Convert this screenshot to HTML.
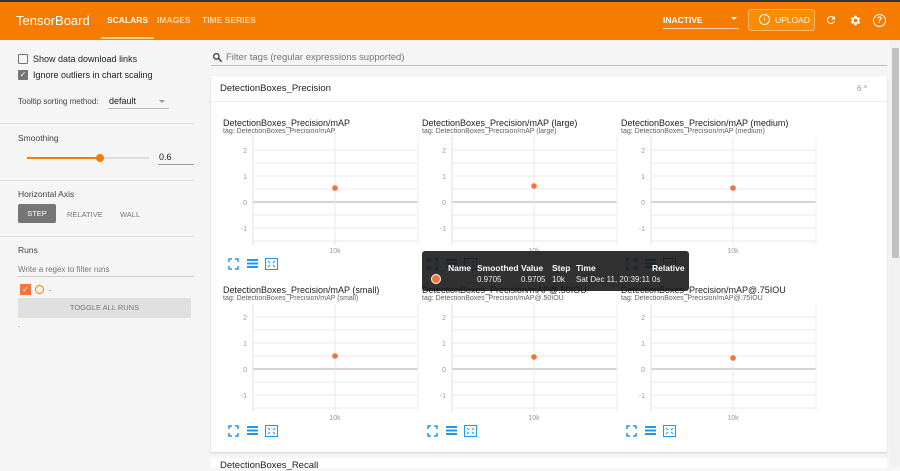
<!DOCTYPE html>
<html><head><meta charset="utf-8">
<style>
*{box-sizing:border-box;margin:0;padding:0}
body{width:900px;height:466px;overflow:hidden;background:#f5f5f5;font-family:"Liberation Sans",Arial,sans-serif;color:#212121;position:relative}
.a{position:absolute;white-space:nowrap}
.hdr{left:0;top:0;width:900px;height:40px;background:#f57c00;border-top:2px solid #333}
.t{font-size:9px;color:#212121}
.s{font-size:7px;color:#616161}
.sep{position:absolute;left:0;width:194px;height:1px;background:#e0e0e0}
</style></head><body>
<div class="a hdr"></div>
<div class="a" style="left:16px;top:13px;font-size:13px;color:#fff;font-weight:500">TensorBoard</div>
<div class="a" style="left:107px;top:15px;font-size:8.5px;color:#fff;font-weight:bold">SCALARS</div>
<div class="a" style="left:101px;top:37px;width:53px;height:2px;background:#ffcc80"></div>
<div class="a" style="left:157px;top:15px;font-size:8.5px;color:#ffd7a8;font-weight:bold">IMAGES</div>
<div class="a" style="left:202px;top:15px;font-size:8.5px;color:#ffd7a8;font-weight:bold">TIME SERIES</div>
<div class="a" style="left:663px;top:15px;font-size:8.5px;color:#fff;font-weight:bold">INACTIVE</div>
<div class="a" style="left:731px;top:17px;width:0;height:0;border-left:3px solid transparent;border-right:3px solid transparent;border-top:3px solid #fff"></div>
<div class="a" style="left:663px;top:28px;width:76px;height:1px;background:#ffd3a0"></div>
<div class="a" style="left:748px;top:9px;width:67px;height:22px;border:1px solid #ffb866;border-radius:3px;background:#fb8c00"></div>
<div class="a" style="left:759px;top:14px;width:11px;height:11px;border:1.3px solid #fff;border-radius:50%;font-size:7px;color:#fff;text-align:center;line-height:9px">i</div>
<div class="a" style="left:775px;top:15px;font-size:8.5px;color:#fff;font-weight:500">UPLOAD</div>
<svg class="a" style="left:825px;top:14px" width="12" height="12" viewBox="0 0 24 24"><path d="M17.6 6.4A8 8 0 1 0 19.7 14h-2.1a6 6 0 1 1-1.4-6.2L13 11h7V4z" fill="#fff"/></svg>
<svg class="a" style="left:849px;top:14px" width="13" height="13" viewBox="0 0 24 24"><path d="M19.4 13a7.5 7.5 0 0 0 0-2l2.1-1.6-2-3.5-2.5 1a7 7 0 0 0-1.7-1L15 3h-4l-.4 2.7a7 7 0 0 0-1.7 1l-2.5-1-2 3.5L6.6 11a7.5 7.5 0 0 0 0 2l-2.1 1.6 2 3.5 2.5-1a7 7 0 0 0 1.7 1L11 21h4l.4-2.7a7 7 0 0 0 1.7-1l2.5 1 2-3.5zM13 15.5a3.5 3.5 0 1 1 0-7 3.5 3.5 0 0 1 0 7z" fill="#fff" transform="translate(-1 0)"/></svg>
<div class="a" style="left:873px;top:14px;width:13px;height:13px;border:1.3px solid #fff;border-radius:50%;font-size:9px;color:#fff;text-align:center;line-height:11px;font-weight:bold">?</div>

<div class="a" style="left:18px;top:54px;width:10px;height:10px;border:1px solid #757575;border-radius:1px"></div>
<div class="a t" style="left:33px;top:54px">Show data download links</div>
<div class="a" style="left:18px;top:70px;width:10px;height:10px;background:#757575;border-radius:1px;color:#fff;font-size:8px;line-height:10px;text-align:center">✓</div>
<div class="a t" style="left:33px;top:70px">Ignore outliers in chart scaling</div>
<div class="a" style="left:18px;top:97px;font-size:8px;color:#424242">Tooltip sorting method:</div>
<div class="a" style="left:109px;top:96px;font-size:9px">default</div>
<div class="a" style="left:159px;top:100px;width:0;height:0;border-left:3px solid transparent;border-right:3px solid transparent;border-top:3px solid #999"></div>
<div class="a" style="left:108px;top:108px;width:61px;height:1px;background:#bbb"></div>
<div class="sep" style="top:123px"></div>
<div class="a" style="left:18px;top:133px;font-size:8.5px;color:#424242">Smoothing</div>
<div class="a" style="left:27px;top:157px;width:73px;height:2px;background:#f57c00"></div>
<div class="a" style="left:100px;top:157px;width:49px;height:2px;background:#ddd"></div>
<div class="a" style="left:96px;top:154px;width:8px;height:8px;border-radius:50%;background:#f57c00"></div>
<div class="a t" style="left:159px;top:152px">0.6</div>
<div class="a" style="left:158px;top:164px;width:36px;height:1px;background:#999"></div>
<div class="sep" style="top:180px"></div>
<div class="a" style="left:18px;top:189px;font-size:8.5px;color:#424242">Horizontal Axis</div>
<div class="a" style="left:18px;top:204px;width:38px;height:19px;background:#757575;border-radius:2px;color:#fff;font-size:7.5px;text-align:center;line-height:19px">STEP</div>
<div class="a" style="left:67px;top:210px;font-size:7.5px;color:#757575">RELATIVE</div>
<div class="a" style="left:120px;top:210px;font-size:7.5px;color:#757575">WALL</div>
<div class="sep" style="top:236px"></div>
<div class="a" style="left:18px;top:245px;font-size:8.5px;color:#424242">Runs</div>
<div class="a" style="left:18px;top:265px;font-size:8px;color:#757575">Write a regex to filter runs</div>
<div class="a" style="left:18px;top:276px;width:176px;height:1px;background:#ccc"></div>
<div class="a" style="left:20px;top:284px;width:11px;height:11px;background:#f4743b;color:#fff;font-size:8px;line-height:11px;text-align:center">✓</div>
<div class="a" style="left:35px;top:285px;width:9px;height:9px;border:1px solid #f57c00;border-radius:50%"></div>
<div class="a" style="left:49px;top:284px;font-size:8px">.</div>
<div class="a" style="left:18px;top:298px;width:173px;height:20px;background:#e0e0e0;border-radius:2px;color:#757575;font-size:7.5px;text-align:center;line-height:20px">TOGGLE ALL RUNS</div>
<div class="a" style="left:18px;top:320px;font-size:8px;color:#757575">.</div>

<svg class="a" style="left:212px;top:52px" width="11" height="11" viewBox="0 0 24 24"><circle cx="9.5" cy="9.5" r="6" fill="none" stroke="#333" stroke-width="2.6"/><path d="M14 14l7 7" stroke="#333" stroke-width="3"/></svg>
<div class="a" style="left:226px;top:52px;font-size:9.5px;color:#757575">Filter tags (regular expressions supported)</div>
<div class="a" style="left:211px;top:65px;width:676px;height:1px;background:#bbb"></div>

<div class="a" style="left:211px;top:76px;width:676px;height:376px;background:#fff;box-shadow:0 1px 2px rgba(0,0,0,.15)"></div>
<div class="a" style="left:211px;top:101px;width:676px;height:1px;background:#eee"></div>
<div class="a" style="left:220px;top:83px;font-size:9.5px">DetectionBoxes_Precision</div>
<div class="a" style="left:857px;top:84px;font-size:8px;color:#999">6 ^</div>
<div class="a" style="left:211px;top:458px;width:676px;height:10px;background:#fff"></div>
<div class="a" style="left:220px;top:460px;font-size:9.5px">DetectionBoxes_Recall</div>

<div class="a" style="left:890px;top:40px;width:10px;height:426px;background:#f1f1f1"></div>
<div class="a" style="left:892px;top:48px;width:7px;height:210px;background:#c1c1c1"></div>

<div id="charts"></div>
<script>
(function(){
var cols=[223,422,621],rows=[118,285];
var names=[["DetectionBoxes_Precision/mAP","DetectionBoxes_Precision/mAP (large)","DetectionBoxes_Precision/mAP (medium)"],["DetectionBoxes_Precision/mAP (small)","DetectionBoxes_Precision/mAP@.50IOU","DetectionBoxes_Precision/mAP@.75IOU"]];
var dots=[[51,49,51],[52,53,54]];
var h="";
for(var r=0;r<2;r++)for(var c=0;c<3;c++){
var x=cols[c],y=rows[r],n=names[r][c];
h+='<div class="a t" style="left:'+x+'px;top:'+y+'px">'+n+'</div>';
h+='<div class="a s" style="left:'+x+'px;top:'+(y+10)+'px">tag: '+n+'</div>';
var ty=y+19,s='';
[13,26,39,52,78,91,104].forEach(function(g){s+='<line x1="30" x2="195" y1="'+g+'" y2="'+g+'" stroke="#e8e8e8"/>'});
s+='<line x1="30" x2="195" y1="65" y2="65" stroke="#aaa"/>';
s+='<line x1="30" x2="30" y1="0" y2="108" stroke="#e0e0e0"/><line x1="112" x2="112" y1="0" y2="108" stroke="#e8e8e8"/><line x1="195" x2="195" y1="0" y2="108" stroke="#eee"/>';
[["2",13],["1",39],["0",65],["-1",91]].forEach(function(l){s+='<text x="24" y="'+(l[1]+3)+'" font-size="7" fill="#999" text-anchor="end" font-family="Liberation Sans">'+l[0]+'</text>'});
s+='<text x="112" y="116" font-size="7" fill="#999" text-anchor="middle" font-family="Liberation Sans">10k</text>';
s+='<circle cx="112" cy="'+dots[r][c]+'" r="2.8" fill="#f4743b"/>';
h+='<svg class="a" style="left:'+x+'px;top:'+ty+'px" width="199" height="120">'+s+'</svg>';
var iy=y+140;
h+='<svg class="a" style="left:'+(x+5)+'px;top:'+iy+'px" width="55" height="12"><path d="M1 4V1h3M7 1h3v3M10 8v3H7M4 11H1V8" fill="none" stroke="#2196f3" stroke-width="1.5"/><g fill="#2196f3"><rect x="19" y="1" width="11" height="2"/><rect x="19" y="4.5" width="11" height="2"/><rect x="19" y="8" width="11" height="2"/></g><rect x="37.5" y="0.5" width="12" height="11" fill="none" stroke="#2196f3"/><path d="M40 3l2 2M47 3l-2 2M40 9l2-2M47 9l-2-2" stroke="#2196f3"/></svg>';
}
document.getElementById("charts").innerHTML=h;
})();
</script>

<div class="a" style="left:422px;top:251px;width:267px;height:40px;background:rgba(20,20,20,.88);border-radius:3px"></div>
<div class="a" style="left:448px;top:263px;font-size:8.5px;color:#fff;font-weight:bold">Name</div>
<div class="a" style="left:477px;top:263px;font-size:8.5px;color:#fff;font-weight:bold">Smoothed</div>
<div class="a" style="left:521px;top:263px;font-size:8.5px;color:#fff;font-weight:bold">Value</div>
<div class="a" style="left:552px;top:263px;font-size:8.5px;color:#fff;font-weight:bold">Step</div>
<div class="a" style="left:576px;top:263px;font-size:8.5px;color:#fff;font-weight:bold">Time</div>
<div class="a" style="left:652px;top:263px;font-size:8.5px;color:#fff;font-weight:bold">Relative</div>
<div class="a" style="left:431px;top:274px;width:10px;height:10px;border-radius:50%;background:#f4743b;border:1px solid #fff"></div>
<div class="a" style="left:477px;top:275px;font-size:8px;color:#eee">0.9705</div>
<div class="a" style="left:521px;top:275px;font-size:8px;color:#eee">0.9705</div>
<div class="a" style="left:552px;top:275px;font-size:8px;color:#eee">10k</div>
<div class="a" style="left:576px;top:275px;font-size:8px;color:#eee">Sat Dec 11, 20:39:11</div>
<div class="a" style="left:652px;top:275px;font-size:8px;color:#eee">0s</div>
</body></html>
